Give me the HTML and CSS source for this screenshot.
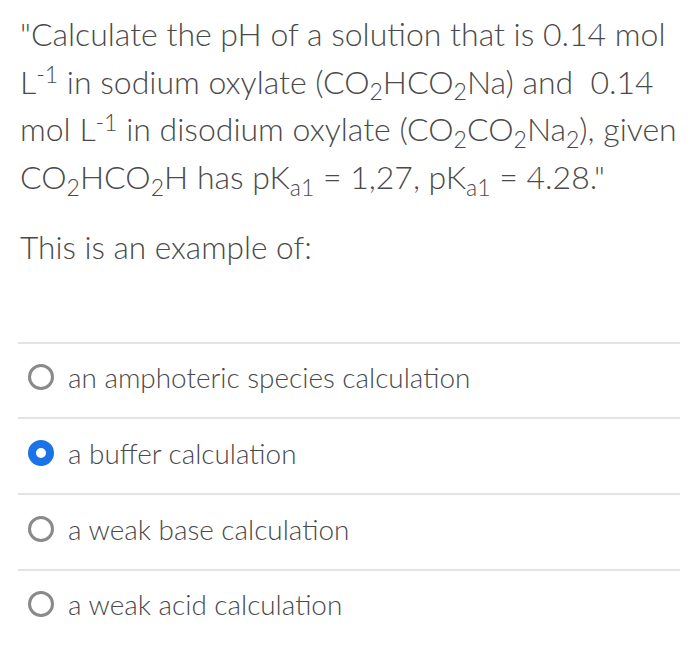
FILE: index.html
```html
<!DOCTYPE html>
<html>
<head>
<meta charset="utf-8">
<link rel="stylesheet" href="styles.css">
</head>
<body>
<div class="page">
  <p class="question">"Calculate the pH of a solution that is 0.14 mol L<sup>-1</sup> in sodium oxylate (CO<sub>2</sub>HCO<sub>2</sub>Na) and&nbsp; 0.14 mol L<sup>-1</sup> in disodium oxylate (CO<sub>2</sub>CO<sub>2</sub>Na<sub>2</sub>), given CO<sub>2</sub>HCO<sub>2</sub>H has pK<sub>a1</sub> = 1,27, pK<sub>a1</sub> = 4.28."</p>
  <p class="prompt">This is an example of:</p>
  <ul class="options">
    <li class="option"><span class="radio"></span><span class="label">an amphoteric species calculation</span></li>
    <li class="option"><span class="radio checked"></span><span class="label">a buffer calculation</span></li>
    <li class="option"><span class="radio"></span><span class="label">a weak base calculation</span></li>
    <li class="option"><span class="radio"></span><span class="label">a weak acid calculation</span></li>
  </ul>
</div>
</body>
</html>
```
FILE: styles.css
```css
html, body {
  margin: 0;
  padding: 0;
  background: #ffffff;
}
.page {
  font-family: Lato, "Liberation Sans", sans-serif;
  font-weight: 300;
  color: #4a4a4a;
  padding: 10px 0 0 20px;
}
.question {
  margin: 0;
  font-size: 32px;
  line-height: 47.7px;
  width: 670px;
}
.question sub, .question sup {
  font-size: 0.72em;
  line-height: 0;
  position: relative;
  vertical-align: baseline;
}
.question sub { top: 0.28em; }
.question sup { top: -0.45em; }
.prompt {
  margin: 23px 0 0 0;
  font-size: 31.6px;
  line-height: 47.7px;
}
.options {
  list-style: none;
  margin: 70px 0 0 -2px;
  padding: 0;
  width: 662px;
}
.option {
  box-sizing: border-box;
  display: flex;
  align-items: center;
  gap: 14px;
  height: 75.7px;
  border-top: 2px solid #e3e3e3;
  padding: 0 0 6px 10px;
}
.radio {
  box-sizing: border-box;
  width: 26px;
  height: 26px;
  border-radius: 50%;
  border: 3px solid #8a8a8a;
  flex: none;
}
.radio.checked {
  border: 8px solid #1a73e8;
  background: #ffffff;
}
.label {
  font-size: 27.9px;
  line-height: 32px;
}
```
